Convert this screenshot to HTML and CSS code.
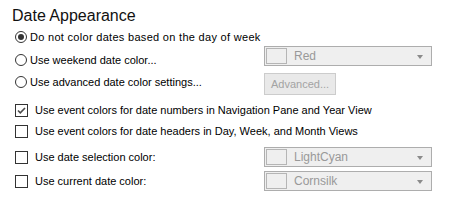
FILE: index.html
```html
<!DOCTYPE html>
<html lang="en">
<head>
    <meta charset="UTF-8">
    <title>Date Appearance</title>
    <link rel="stylesheet" href="styles.css">
</head>
<body>

    <!-- Date Appearance options -->
    <div class="panel">
        <h2 class="title">Date Appearance</h2>

        <div class="row row-first">
            <span class="radio checked"></span>
            <span class="label wide">Do not color dates based on the day of week</span>
        </div>
        <div class="row row-weekend">
            <div class="opt">
                <span class="radio"></span>
                <span class="label">Use weekend date color...</span>
            </div>
            <div class="combo">
                <span class="swatch"></span>
                <span class="combo-text">Red</span>
                <span class="arrow"></span>
            </div>
        </div>
        <div class="row row-advanced">
            <div class="opt">
                <span class="radio"></span>
                <span class="label">Use advanced date color settings...</span>
            </div>
            <button class="btn" disabled>Advanced...</button>
        </div>

        <div class="row row-check1">
            <span class="check">
                <svg width="11" height="11" viewBox="0 0 11 11"><path d="M2 5.5 L4.3 7.8 L9 3" fill="none" stroke="#4a4a4a" stroke-width="1.6"/></svg>
            </span>
            <span class="label">Use event colors for date numbers in Navigation Pane and Year View</span>
        </div>
        <div class="row row-check2">
            <span class="check"></span>
            <span class="label">Use event colors for date headers in Day, Week, and Month Views</span>
        </div>
        <div class="row row-check3">
            <div class="opt">
                <span class="check"></span>
                <span class="label">Use date selection color:</span>
            </div>
            <div class="combo">
                <span class="swatch"></span>
                <span class="combo-text">LightCyan</span>
                <span class="arrow"></span>
            </div>
        </div>
        <div class="row row-check4">
            <div class="opt">
                <span class="check"></span>
                <span class="label">Use current date color:</span>
            </div>
            <div class="combo">
                <span class="swatch"></span>
                <span class="combo-text">Cornsilk</span>
                <span class="arrow"></span>
            </div>
        </div>
    </div>

</body>
</html>
```

FILE: styles.css
```css
body {
    margin: 0;
    padding: 0;
    background-color: #ffffff;
    font-family: "Liberation Sans", Arial, sans-serif;
    color: #000000;
}

.panel {
    padding: 7px 0 0 15px;
    width: 435px;
}

.title {
    margin: 0 0 0 -3px;
    font-size: 16px;
    font-weight: normal;
    line-height: 18px;
    height: 18px;
    color: #111111;
}

.row {
    display: flex;
    align-items: center;
    font-size: 11px;
    line-height: 14px;
}

.opt {
    display: flex;
    align-items: center;
    width: 249px;
}

.label {
    white-space: nowrap;
}

.label.wide {
    letter-spacing: 0.3px;
}

.radio {
    box-sizing: border-box;
    width: 12px;
    height: 12px;
    border: 1px solid #333333;
    border-radius: 50%;
    margin-right: 3px;
    display: flex;
    align-items: center;
    justify-content: center;
    flex-shrink: 0;
}

.radio.checked::after {
    content: "";
    width: 6px;
    height: 6px;
    border-radius: 50%;
    background-color: #333333;
}

.check {
    box-sizing: border-box;
    width: 13px;
    height: 13px;
    border: 1px solid #333333;
    margin-right: 7px;
    display: flex;
    align-items: center;
    justify-content: center;
    flex-shrink: 0;
}

.check svg {
    display: block;
}

/* row placement */
.row-first {
    margin-top: 5px;
    height: 14px;
}

.row-weekend {
    margin-top: 2px;
    align-items: flex-start;
}

.row-weekend .opt {
    padding-top: 7px;
}

.row-advanced {
    margin-top: 6px;
    align-items: flex-start;
}

.row-advanced .opt {
    padding-top: 2px;
}

.row-check1 {
    margin-top: 8px;
    height: 14px;
}

.row-check2 {
    margin-top: 7px;
    height: 14px;
}

.row-check3 {
    margin-top: 9px;
}

.row-check4 {
    margin-top: 4px;
}

/* disabled color combo */
.combo {
    box-sizing: border-box;
    width: 168px;
    height: 20px;
    border: 1px solid #adadad;
    background-color: #efefef;
    display: flex;
    align-items: center;
    padding-left: 1px;
    position: relative;
}

.swatch {
    box-sizing: border-box;
    width: 21px;
    height: 16px;
    border: 1px solid #b5b5b5;
    background-color: #efefef;
    margin-right: 7px;
}

.combo-text {
    color: #999999;
    font-size: 12px;
}

.arrow {
    position: absolute;
    right: 8px;
    top: 8px;
    width: 0;
    height: 0;
    border-left: 3.5px solid transparent;
    border-right: 3.5px solid transparent;
    border-top: 4px solid #8a8a8a;
}

.btn {
    box-sizing: border-box;
    width: 72px;
    height: 22px;
    border: 1px solid #cccccc;
    background-color: #e9e9e9;
    color: #a3a3a3;
    font-family: "Liberation Sans", Arial, sans-serif;
    font-size: 11px;
    padding: 0 0 0 6px;
    text-align: left;
}
```
